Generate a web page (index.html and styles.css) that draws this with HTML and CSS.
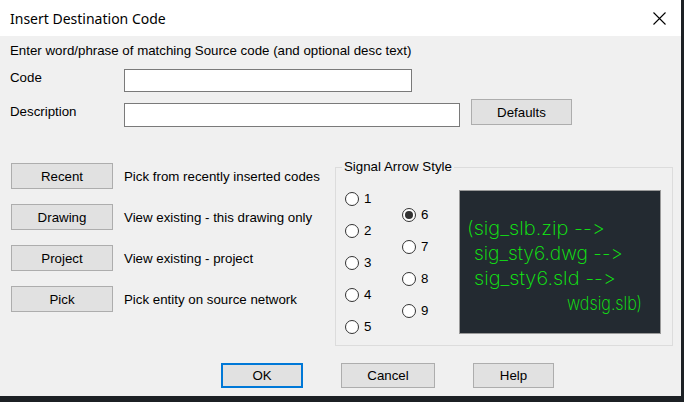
FILE: index.html
```html
<!DOCTYPE html>
<html>
<head>
<meta charset="utf-8">
<link rel="stylesheet" href="styles.css">
</head>
<body>
<div class="dialog">
  <div class="titlebar">
    <span class="title">Insert Destination Code</span>
    <svg class="close" width="13" height="13" viewBox="0 0 13 13"><path d="M0.5 0.5 L12.5 12.5 M12.5 0.5 L0.5 12.5" stroke="#000" stroke-width="1.1" fill="none"/></svg>
  </div>
  <div class="content">
    <div class="intro">Enter word/phrase of matching Source code (and optional desc text)</div>
    <div class="row row-code">
      <label class="lbl lbl-code">Code</label>
      <input class="field field-code" type="text">
    </div>
    <div class="row row-desc">
      <label class="lbl lbl-desc">Description</label>
      <input class="field field-desc" type="text">
      <button class="btn btn-defaults">Defaults</button>
    </div>
    <div class="lower">
      <div class="picks">
        <div class="pick-row"><button class="btn btn-pick">Recent</button><span class="pick-text">Pick from recently inserted codes</span></div>
        <div class="pick-row"><button class="btn btn-pick">Drawing</button><span class="pick-text">View existing - this drawing only</span></div>
        <div class="pick-row"><button class="btn btn-pick">Project</button><span class="pick-text">View existing - project</span></div>
        <div class="pick-row"><button class="btn btn-pick">Pick</button><span class="pick-text">Pick entity on source network</span></div>
      </div>
      <fieldset class="group">
        <legend class="group-title">Signal Arrow Style</legend>
        <div class="radios radios-a">
          <div class="radio-item"><span class="radio"></span><span class="radio-label">1</span></div>
          <div class="radio-item"><span class="radio"></span><span class="radio-label">2</span></div>
          <div class="radio-item"><span class="radio"></span><span class="radio-label">3</span></div>
          <div class="radio-item"><span class="radio"></span><span class="radio-label">4</span></div>
          <div class="radio-item"><span class="radio"></span><span class="radio-label">5</span></div>
        </div>
        <div class="radios radios-b">
          <div class="radio-item"><span class="radio checked"></span><span class="radio-label">6</span></div>
          <div class="radio-item"><span class="radio"></span><span class="radio-label">7</span></div>
          <div class="radio-item"><span class="radio"></span><span class="radio-label">8</span></div>
          <div class="radio-item"><span class="radio"></span><span class="radio-label">9</span></div>
        </div>
        <div class="preview">
          <svg class="preview-svg" width="200" height="142" viewBox="0 0 200 142">
            <text x="7" y="44" textLength="138" lengthAdjust="spacingAndGlyphs">(sig_slb.zip  --&gt;</text>
            <text x="14" y="69" textLength="149" lengthAdjust="spacingAndGlyphs">sig_sty6.dwg  --&gt;</text>
            <text x="14" y="94" textLength="142" lengthAdjust="spacingAndGlyphs">sig_sty6.sld  --&gt;</text>
            <text x="107" y="119" textLength="75" lengthAdjust="spacingAndGlyphs">wdsig.slb)</text>
          </svg>
        </div>
      </fieldset>
    </div>
    <div class="actions">
      <button class="btn btn-ok">OK</button>
      <button class="btn btn-cancel">Cancel</button>
      <button class="btn btn-help">Help</button>
    </div>
  </div>
</div>
</body>
</html>
```
FILE: styles.css
```css
html, body {
  margin: 0;
  padding: 0;
}
body {
  background: #1c2024;
  width: 684px;
  height: 402px;
  overflow: hidden;
  font-family: "Liberation Sans", Arial, sans-serif;
  font-size: 13.3px;
  color: #000;
}
.dialog {
  width: 681px;
  height: 396px;
  background: #f0f0f0;
}
.titlebar {
  height: 36px;
  background: #fff;
  display: flex;
  align-items: center;
  justify-content: space-between;
  padding: 0 15px 0 10px;
  box-sizing: border-box;
}
.title {
  font-family: "Noto Sans", "Open Sans", sans-serif;
  font-size: 14px;
  color: #000;
}
.close {
  display: block;
  margin-top: 1px;
}
.content {
  padding: 7px 0 0 10px;
}
.intro {
  line-height: 16px;
  height: 16px;
  white-space: nowrap;
}
.row {
  display: flex;
  align-items: flex-start;
}
.row-code {
  margin-top: 10px;
}
.row-desc {
  margin-top: 7px;
}
.lbl {
  width: 114px;
  line-height: 16px;
}
.lbl-code {
  padding-top: 1px;
}
.lbl-desc {
  padding-top: 5px;
}
.field {
  box-sizing: border-box;
  margin: 0;
  padding: 0 3px;
  border: 1px solid #7a7a7a;
  background: #fff;
  outline: none;
  font-family: inherit;
  font-size: 13px;
}
.field-code {
  width: 288px;
  height: 23px;
}
.field-desc {
  width: 336px;
  height: 24px;
  margin-top: 4px;
}
.btn {
  box-sizing: border-box;
  margin: 0;
  padding: 0;
  background: #e1e1e1;
  border: 1px solid #adadad;
  font-family: "Liberation Sans", Arial, sans-serif;
  font-size: 13.3px;
  color: #000;
  text-align: center;
}
.btn-defaults {
  width: 101px;
  height: 26px;
  margin-left: 11px;
}
.lower {
  display: flex;
  align-items: flex-start;
  margin-top: 32px;
}
.picks {
  width: 325px;
  flex-shrink: 0;
  padding-top: 4px;
  display: flex;
  flex-direction: column;
  gap: 15px;
}
.pick-row {
  display: flex;
  align-items: center;
}
.btn-pick {
  width: 102px;
  height: 26px;
  margin-left: 1px;
}
.pick-text {
  margin-left: 11px;
  white-space: nowrap;
}
.group {
  box-sizing: border-box;
  width: 338px;
  flex-shrink: 0;
  margin: 0;
  padding: 15px 11px 10px 9px;
  border: 1px solid #dcdcdc;
  display: flex;
  align-items: flex-start;
  min-inline-size: 0;
}
.group-title {
  margin-left: -3px;
  padding: 0 2px;
  line-height: 16px;
  font-size: 13.3px;
}
.radios {
  width: 57px;
  flex-shrink: 0;
  display: flex;
  flex-direction: column;
  gap: 16px;
}
.radios-a {
  margin-top: 1px;
}
.radios-b {
  margin-top: 17px;
}
.radio-item {
  display: flex;
  align-items: center;
  height: 16px;
}
.radio {
  box-sizing: border-box;
  width: 14px;
  height: 14px;
  border: 1px solid #333;
  border-radius: 50%;
  background: #fff;
  display: flex;
  align-items: center;
  justify-content: center;
}
.radio.checked::after {
  content: "";
  width: 8px;
  height: 8px;
  border-radius: 50%;
  background: #333;
}
.radio-label {
  margin-left: 5px;
  font-size: 13.3px;
  line-height: 16px;
}
.preview {
  box-sizing: border-box;
  flex-shrink: 0;
  width: 202px;
  height: 144px;
  border: 1px solid #9a9a9a;
  background: #232a31;
}
.preview-svg {
  display: block;
}
.preview-svg text {
  font-family: "Inter", "DejaVu Sans", sans-serif;
  font-weight: 200;
  font-size: 19px;
  font-variant-ligatures: none;
  font-feature-settings: "calt" 0, "liga" 0;
  fill: #10f010;
}
.actions {
  display: flex;
  gap: 38px;
  margin-top: 17px;
  padding-left: 211px;
}
.actions .btn {
  height: 25px;
}
.btn-ok {
  width: 82px;
  border: 2px solid #0078d7;
}
.btn-cancel {
  width: 94px;
}
.btn-help {
  width: 81px;
}
```
